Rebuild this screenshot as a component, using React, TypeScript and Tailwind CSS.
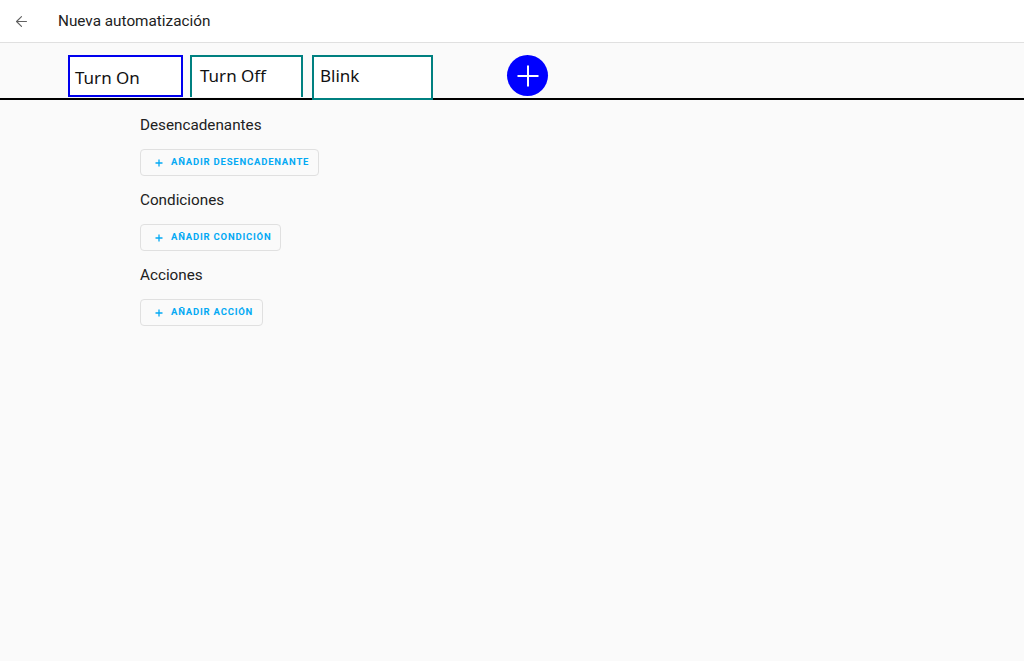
import { ArrowLeft } from 'lucide-react';

const tabs = [
  { label: 'Turn On', active: true },
  { label: 'Turn Off', active: false },
  { label: 'Blink', active: false },
];

const sections = [
  { title: 'Desencadenantes', action: 'Añadir desencadenante' },
  { title: 'Condiciones', action: 'Añadir condición' },
  { title: 'Acciones', action: 'Añadir acción' },
];

const AddButton = ({ label }: { label: string }) => (
  <button className="mt-3 flex h-[27px] items-center gap-[8px] rounded border border-[#e0e0e0] pl-[14px] pr-[9px] text-[9.5px] font-bold uppercase tracking-[0.8px] text-[#03a9f4]">
    <svg width="8" height="8" viewBox="0 0 8 8" className="shrink-0">
      <path d="M4 0.5v7M0.5 4h7" stroke="currentColor" strokeWidth="1.3" />
    </svg>
    {label}
  </button>
);

const App = () => {
  return (
    <div className="flex h-[661px] w-[1024px] flex-col bg-[#fafafa] font-['Roboto',sans-serif]">
      <header className="flex h-[43px] shrink-0 items-center border-b border-[#e0e0e0] bg-white">
        <ArrowLeft size={17} strokeWidth={1.6} className="ml-[13px] text-[#616161]" />
        <h1 className="ml-[28px] text-[15.3px] text-[#212121]">Nueva automatización</h1>
      </header>

      <div className="flex h-[57px] shrink-0 items-end border-b-2 border-black pl-[68px] font-['Noto_Sans',sans-serif] text-[17px] text-[#111]">
        <div className="mb-[1px] flex h-[42px] w-[115px] items-center border-2 border-[#0000ee] bg-white pl-[5px] pt-[3px]">
          {tabs[0].label}
        </div>
        <div className="ml-[7px] mb-[1px] flex h-[42px] w-[113px] items-start border-2 border-b-0 border-[#008080] bg-white pl-[8px] pt-[6px]">
          {tabs[1].label}
        </div>
        <div className="-mb-[2px] ml-[9px] flex h-[45px] w-[121px] items-start border-2 border-[#008080] bg-white pl-[6px] pt-[6px]">
          {tabs[2].label}
        </div>
        <button className="mb-[2px] ml-[74px] flex h-[41px] w-[41px] items-center justify-center self-end rounded-full bg-[#0000ff]">
          <svg width="24" height="24" viewBox="0 0 24 24">
            <path d="M12 1.5v21M1.5 12h21" stroke="white" strokeWidth="2" />
          </svg>
        </button>
      </div>

      <main className="flex flex-col items-start pl-[140px] pt-[13px]">
        {sections.map((s) => (
          <section key={s.title} className="mb-3 flex flex-col items-start">
            <h2 className="text-[15.25px] leading-[24px] text-[#212121]">{s.title}</h2>
            <AddButton label={s.action} />
          </section>
        ))}
      </main>
    </div>
  );
};

export default App;
